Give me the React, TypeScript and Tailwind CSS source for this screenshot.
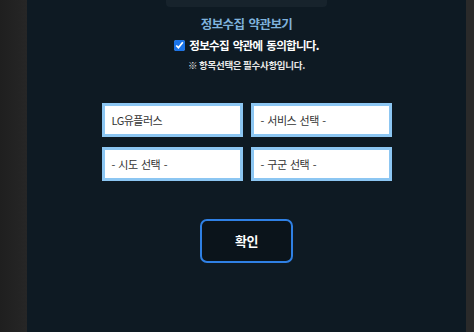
export default function App() {
  return (
    <div
      className="flex h-[332px] w-[474px] overflow-hidden bg-[#101c25]"
      style={{ fontFamily: '"Noto Sans CJK KR", "Noto Sans", sans-serif' }}
    >
      <div className="w-[27px] shrink-0 bg-gradient-to-r from-[#1f1f1f] to-[#262626]" />
      <main className="flex flex-1 flex-col items-center bg-[#0e1a23]">
        <div className="h-[7px] w-[161px] rounded-b-sm bg-[#17232c]" />
        <h2 className="mt-[9px] text-[12.5px] font-bold leading-[16px] tracking-[-0.6px] text-[#7fb2dc] [word-spacing:2px]">
          정보수집 약관보기
        </h2>
        <label className="mt-[5px] flex items-center gap-[4px] text-[11.5px] font-bold leading-[16px] tracking-[-0.7px] text-white [word-spacing:2px]">
          <input type="checkbox" defaultChecked className="h-[11px] w-[11px] accent-[#1a73e8]" />
          정보수집 약관에 동의합니다.
        </label>
        <p className="mt-[6px] text-[9.5px] font-bold leading-[12px] tracking-[-0.3px] text-[#e8e8e8]">
          ※ 항목선택은 필수사항입니다.
        </p>

        <div className="mt-[32px] grid grid-cols-2 gap-x-[8px] gap-y-[10px]">
          {['LG유플러스', '- 서비스 선택 -', '- 시도 선택 -', '- 구군 선택 -'].map((t) => (
            <div
              key={t}
              className="flex h-[34px] w-[141px] items-center border-[3px] border-[#8cc6f2] bg-white px-[7px] text-[11px] tracking-[-0.5px] text-[#333] [word-spacing:1.5px]"
            >
              {t}
            </div>
          ))}
        </div>

        <button className="mt-[38px] flex h-[44px] w-[93px] items-center justify-center rounded-[7px] border-[2px] border-[#2f80e4] bg-[#0b141b] text-[13px] font-bold tracking-[-0.5px] text-white">
          확인
        </button>
      </main>
      <div className="w-[8px] shrink-0 bg-[#2a2a2a]" />
    </div>
  )
}
